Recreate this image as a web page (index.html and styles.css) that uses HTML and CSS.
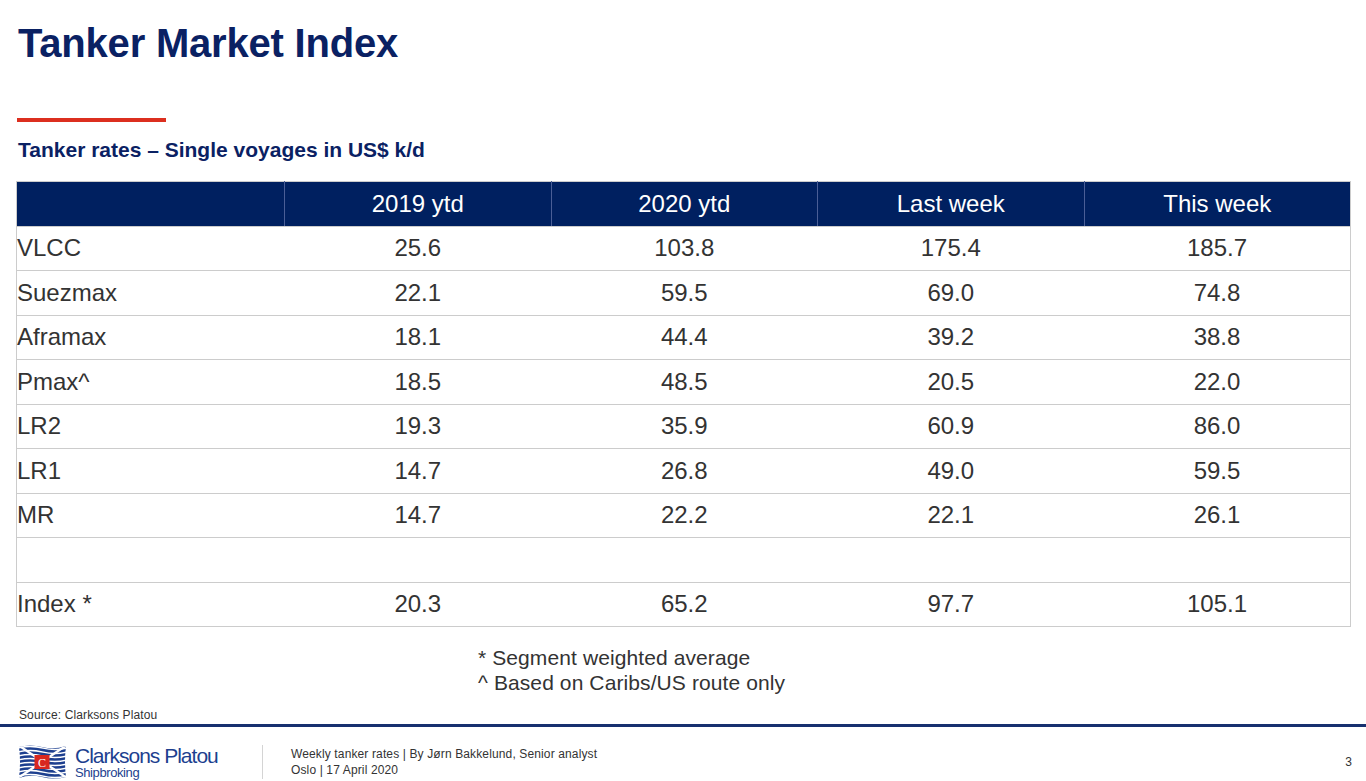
FILE: index.html
```html
<!DOCTYPE html>
<html lang="en">
<head>
<meta charset="utf-8">
<title>Tanker Market Index</title>
<link rel="stylesheet" href="styles.css">
</head>
<body>
<main class="slide">
  <h1 class="title">Tanker Market Index</h1>
  <div class="accent"></div>
  <h2 class="subtitle">Tanker rates – Single voyages in US$ k/d</h2>
  <table class="rates">
    <colgroup><col class="col-name"><col><col><col><col></colgroup>
    <thead>
      <tr><th></th><th>2019 ytd</th><th>2020 ytd</th><th>Last week</th><th>This week</th></tr>
    </thead>
    <tbody>
      <tr><td class="name">VLCC</td><td>25.6</td><td>103.8</td><td>175.4</td><td>185.7</td></tr>
      <tr><td class="name">Suezmax</td><td>22.1</td><td>59.5</td><td>69.0</td><td>74.8</td></tr>
      <tr><td class="name">Aframax</td><td>18.1</td><td>44.4</td><td>39.2</td><td>38.8</td></tr>
      <tr><td class="name">Pmax^</td><td>18.5</td><td>48.5</td><td>20.5</td><td>22.0</td></tr>
      <tr><td class="name">LR2</td><td>19.3</td><td>35.9</td><td>60.9</td><td>86.0</td></tr>
      <tr><td class="name">LR1</td><td>14.7</td><td>26.8</td><td>49.0</td><td>59.5</td></tr>
      <tr><td class="name">MR</td><td>14.7</td><td>22.2</td><td>22.1</td><td>26.1</td></tr>
      <tr class="blank"><td class="name"></td><td></td><td></td><td></td><td></td></tr>
      <tr><td class="name">Index *</td><td>20.3</td><td>65.2</td><td>97.7</td><td>105.1</td></tr>
    </tbody>
  </table>
  <div class="notes">
    <p>* Segment weighted average</p>
    <p>^ Based on Caribs/US route only</p>
  </div>
  <p class="source">Source: Clarksons Platou</p>
</main>
<footer class="footer">
  <div class="brand">
    <svg class="flag" width="49" height="35" viewBox="0 0 49 35" aria-hidden="true">
      <defs>
        <clipPath id="flagclip">
          <path d="M1 3 Q12 0 24 3 T48 2 Q46 17.5 48 33 Q36 36 24 33 T1 34 Q3 18 1 3 Z"/>
        </clipPath>
      </defs>
      <g clip-path="url(#flagclip)">
        <rect x="0" y="0" width="49" height="35" fill="#ffffff"/>
        <g fill="none" stroke="#1d3f8f" stroke-width="2.4">
          <path d="M0 2 Q12 -1 24.5 2 T49 2"/>
          <path d="M0 6 Q12 3 24.5 6 T49 6"/>
          <path d="M0 10 Q12 7 24.5 10 T49 10"/>
          <path d="M0 14 Q12 11 24.5 14 T49 14"/>
          <path d="M0 18 Q12 15 24.5 18 T49 18"/>
          <path d="M0 22 Q12 19 24.5 22 T49 22"/>
          <path d="M0 26 Q12 23 24.5 26 T49 26"/>
          <path d="M0 30 Q12 27 24.5 30 T49 30"/>
          <path d="M0 34 Q12 31 24.5 34 T49 34"/>
        </g>
        <g stroke="#ffffff" stroke-width="2.4">
          <line x1="0" y1="1" x2="49" y2="34"/>
          <line x1="49" y1="1" x2="0" y2="34"/>
        </g>
      </g>
      <rect x="16.5" y="11" width="15" height="14" fill="#d8271f"/>
      <text x="24" y="22.5" text-anchor="middle" class="flag-c">C</text>
    </svg>
    <div class="brand-text">
      <span class="brand-name">Clarksons Platou</span>
      <span class="brand-sub">Shipbroking</span>
    </div>
  </div>
  <div class="divider"></div>
  <div class="meta">
    <p>Weekly tanker rates | By Jørn Bakkelund, Senior analyst</p>
    <p>Oslo | 17 April 2020</p>
  </div>
  <div class="page">3</div>
</footer>
</body>
</html>
```
FILE: styles.css
```css
html, body {
  margin: 0;
  padding: 0;
  background: #ffffff;
}
body {
  width: 1366px;
  height: 781px;
  overflow: hidden;
  font-family: "Liberation Sans", Arial, sans-serif;
  color: #333333;
}
.slide {
  display: flex;
  flex-direction: column;
  align-items: flex-start;
}
.title {
  margin: 20px 0 0 18px;
  font-size: 40px;
  line-height: 46px;
  font-weight: bold;
  color: #0a2163;
  letter-spacing: -0.2px;
}
.accent {
  margin: 52px 0 0 17px;
  width: 149px;
  height: 4px;
  background: #dc2f1f;
}
.subtitle {
  margin: 16px 0 0 18px;
  font-size: 21px;
  line-height: 24px;
  font-weight: bold;
  color: #0a2163;
}
.rates {
  margin: 19px 0 0 16px;
  width: 1335px;
  table-layout: fixed;
  border-collapse: collapse;
  font-size: 24px;
  color: #333333;
  border: 1px solid #cccccc;
}
.col-name {
  width: 268px;
}
.rates tr {
  height: 44.5px;
}
.rates th,
.rates td {
  padding: 0;
  border: 0;
  border-top: 1px solid #cccccc;
  border-bottom: 1px solid #cccccc;
  text-align: center;
  vertical-align: middle;
  font-weight: normal;
  line-height: 26px;
}
.rates th {
  background: #002060;
  color: #ffffff;
  border-left: 1px solid #4a5e96;
  border-right: 1px solid #4a5e96;
}
.rates th:first-child {
  border-left-color: #cccccc;
}
.rates th:last-child {
  border-right-color: #cccccc;
}
.rates td:first-child {
  border-left: 1px solid #cccccc;
}
.rates td:last-child {
  border-right: 1px solid #cccccc;
}
.rates td.name {
  text-align: left;
  padding-left: 0;
}
.notes {
  margin: 18px 0 0 478px;
  font-size: 21px;
  line-height: 25px;
  letter-spacing: 0.1px;
  color: #333333;
}
.notes p {
  margin: 0;
}
.source {
  margin: 13px 0 0 19px;
  font-size: 12px;
  line-height: 14px;
  letter-spacing: 0.12px;
  color: #333333;
}
.footer {
  margin-top: 2px;
  border-top: 3px solid #17306f;
  display: flex;
  align-items: flex-start;
  padding: 17px 0 0 18px;
}
.brand {
  width: 244px;
  display: flex;
  align-items: flex-start;
}
.flag {
  display: block;
  flex: none;
}
.flag-c {
  font-family: "Liberation Serif", "DejaVu Serif", serif;
  font-size: 12px;
  fill: #ffffff;
}
.brand-text {
  margin: 1px 0 0 8px;
  display: flex;
  flex-direction: column;
  color: #1d3f8f;
}
.brand-name {
  font-size: 21px;
  line-height: 21px;
  letter-spacing: -1px;
}
.brand-sub {
  font-size: 13px;
  line-height: 13px;
  letter-spacing: -0.4px;
}
.divider {
  width: 1px;
  height: 34px;
  margin-top: 1px;
  background: #d4d4d4;
}
.meta {
  margin: 2px 0 0 28px;
  font-size: 12px;
  line-height: 16px;
  letter-spacing: 0.13px;
  color: #333333;
}
.meta p {
  margin: 0;
}
.page {
  margin: 10px 14px 0 auto;
  font-size: 12px;
  line-height: 16px;
  color: #333333;
}
```
